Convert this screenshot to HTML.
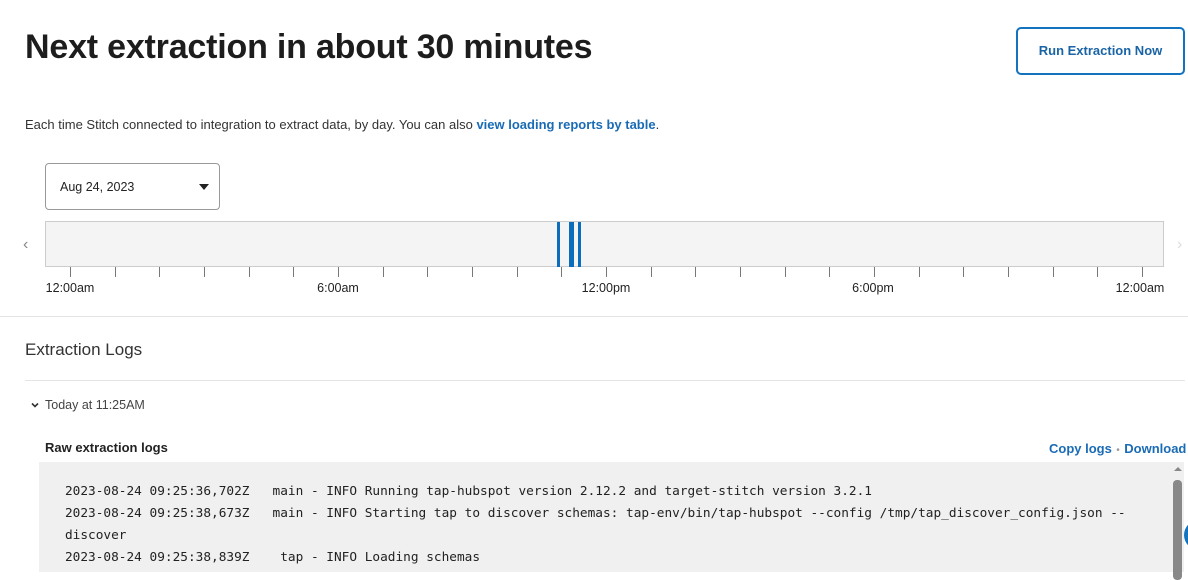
<!DOCTYPE html>
<html><head><style>
body{margin:0;width:1188px;height:572px;overflow:hidden;background:#fff;font-family:"Liberation Sans",sans-serif;color:#222;position:relative}
.a{position:absolute}
h1{position:absolute;left:25px;top:28px;margin:0;font-size:34px;font-weight:bold;color:#1d1d1d;letter-spacing:-0.2px}
.btn{left:1016px;top:27px;width:165px;height:44px;border:2px solid #1473bf;border-radius:5px;color:#1a64a6;font-weight:bold;font-size:13px;text-align:center;line-height:44px}
.desc{left:25px;top:117px;font-size:13px;color:#333}
.desc b{color:#1a6bb5}
.sel{left:45px;top:163px;width:175px;height:47px;border:1px solid #999;border-radius:4px;font-size:12.5px;line-height:47px;box-sizing:border-box;padding-left:14px}
.tri{right:10px;top:20px;width:0;height:0;border-left:5px solid transparent;border-right:5px solid transparent;border-top:6px solid #222}
.bar{left:45px;top:221px;width:1119px;height:46px;border:1px solid #ccc;background:#f4f4f4;box-sizing:border-box}
.tick{top:267px;width:1px;height:10px;background:#777}
.lbl{top:281px;font-size:12.5px;color:#222;transform:translateX(-50%)}
.hr{height:1px;background:#e4e4e4}
.mono{font-family:"DejaVu Sans Mono","Liberation Mono",monospace;font-size:12.77px;color:#222;line-height:22px;white-space:pre}
.lk{color:#1a6bb5;font-weight:bold;font-size:13px}
</style></head><body>
<h1>Next extraction in about 30 minutes</h1>
<div class="a btn">Run Extraction Now</div>
<div class="a desc">Each time Stitch connected to integration to extract data, by day. You can also <b>view loading reports by table</b>.</div>
<div class="a sel">Aug 24, 2023<div class="a tri"></div></div>
<div class="a" style="left:23px;top:236px;font-size:16px;color:#888">&#8249;</div>
<div class="a" style="left:1177px;top:236px;font-size:16px;color:#ddd">&#8250;</div>
<div class="a bar"></div>
<div class="a" style="left:557px;top:222px;width:3px;height:45px;background:#0b6dbb"></div>
<div class="a" style="left:569px;top:222px;width:5px;height:45px;background:#0b6dbb"></div>
<div class="a" style="left:578px;top:222px;width:3px;height:45px;background:#0b6dbb"></div>
<div id="ticks"></div>
<div class="a lbl" style="left:70px">12:00am</div>
<div class="a lbl" style="left:338px">6:00am</div>
<div class="a lbl" style="left:606px">12:00pm</div>
<div class="a lbl" style="left:873px">6:00pm</div>
<div class="a lbl" style="left:1140px">12:00am</div>
<div class="a hr" style="left:0;top:316px;width:1188px"></div>
<div class="a" style="left:25px;top:340px;font-size:17px;color:#333">Extraction Logs</div>
<div class="a hr" style="left:25px;top:380px;width:1160px"></div>
<svg class="a" style="left:31px;top:402px" width="8" height="6" viewBox="0 0 8 6"><path d="M1 1.5L4 4.5L7 1.5" stroke="#333" stroke-width="1.6" fill="none"/></svg>
<div class="a" style="left:45px;top:398px;font-size:12.5px;color:#444">Today at 11:25AM</div>
<div class="a" style="left:45px;top:440px;font-size:13px;font-weight:bold;color:#222">Raw extraction logs</div>
<div class="a" style="left:1049px;top:440px"><span class="lk">Copy logs</span> <span style="color:#999;font-size:10px">&#8226;</span> <span class="lk">Download</span></div>
<div class="a" style="left:39px;top:462px;width:1133px;height:110px;background:#f0f0f0"></div>
<div class="a" style="left:1172px;top:462px;width:12px;height:110px;background:#f0f0f0"></div>
<div class="a" style="left:1173px;top:480px;width:9px;height:100px;background:#888;border-radius:4px"></div>
<div class="a" style="left:1174px;top:467px;width:0;height:0;border-left:4px solid transparent;border-right:4px solid transparent;border-bottom:4px solid #888"></div>
<div class="a" style="left:1184px;top:520px;width:30px;height:30px;border-radius:50%;background:#1473bf"></div>
<div class="a mono" style="left:65px;top:481px">2023-08-24 09:25:36,702Z   main - INFO Running tap-hubspot version 2.12.2 and target-stitch version 3.2.1
2023-08-24 09:25:38,673Z   main - INFO Starting tap to discover schemas: tap-env/bin/tap-hubspot --config /tmp/tap_discover_config.json --
discover
2023-08-24 09:25:38,839Z    tap - INFO Loading schemas</div>
<script>
var t=document.getElementById('ticks'),h='';
for(var i=0;i<=24;i++){var x=70+i*(1072/24);h+='<div class="a tick" style="left:'+Math.round(x)+'px"></div>';}
t.innerHTML=h;
</script>
</body></html>
